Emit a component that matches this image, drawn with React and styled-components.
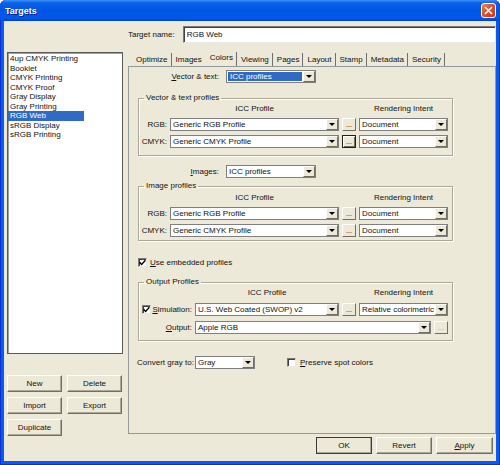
import React from "react";
import styled, { createGlobalStyle, css } from "styled-components";

const GlobalStyle = createGlobalStyle`
  html, body {
    margin: 0;
    padding: 0;
    background: #ffffff;
  }
  body {
    font-family: "Liberation Sans", Arial, sans-serif;
    font-size: 8px;
    color: #111;
  }
  #root {
    width: 500px;
    height: 465px;
  }
  * {
    box-sizing: border-box;
  }
`;

const Window = styled.div`
  width: 500px;
  height: 465px;
  display: flex;
  flex-direction: column;
  background: #0b5be6;
  border-radius: 6px 6px 0 0;
  box-shadow: inset 1px 0 0 #0831d9, inset -1px 0 0 #0831d9, inset 0 -1px 0 #0831d9;
  overflow: hidden;
`;

const TitleBar = styled.div`
  height: 21px;
  flex: none;
  display: flex;
  align-items: center;
  justify-content: space-between;
  padding: 0 4px 0 5px;
  background: linear-gradient(#3e8ff7 0%, #0a60e8 14%, #0054e3 50%, #0159ea 86%, #003ed8 100%);
`;

const Title = styled.span`
  color: #fff;
  font-size: 9px;
  font-weight: bold;
  text-shadow: 1px 1px 0 #0a1e8a;
`;

const CloseBtn = styled.div`
  width: 15px;
  height: 15px;
  border: 1px solid #fff;
  border-radius: 3px;
  background: linear-gradient(135deg, #e9865f 0%, #d9512c 45%, #c23a1b 100%);
  display: flex;
  align-items: center;
  justify-content: center;
`;

const Client = styled.div`
  flex: 1;
  margin: 0 4px 4px;
  background: #ece9d8;
  display: grid;
  grid-template-columns: 116px 368px;
  column-gap: 5px;
  padding-left: 3px;
`;

const LeftCol = styled.div`
  display: flex;
  flex-direction: column;
  padding-top: 31px;
`;

const TargetList = styled.div`
  height: 302px;
  background: #fff;
  border: 1px solid #5a5a5a;
  box-shadow: inset 1px 1px 0 #a0a0a0;
  padding-top: 1px;
`;

const ListItems = styled.div`
  display: inline-flex;
  flex-direction: column;
`;

const ListItem = styled.div`
  height: 9.5px;
  line-height: 9.5px;
  padding: 0 6px 0 2px;
  white-space: nowrap;
  ${(p) =>
    p.$selected &&
    css`
      background: #316ac5;
      color: #fff;
    `}
`;

const LeftButtons = styled.div`
  margin-top: 21px;
  display: grid;
  grid-template-columns: 55px 55px;
  column-gap: 5px;
  row-gap: 5px;
`;

const Button = styled.div`
  height: 17px;
  width: ${(p) => (p.$w ? `${p.$w}px` : "auto")};
  display: flex;
  align-items: center;
  justify-content: center;
  background: #ece9d8;
  border: 1px solid;
  border-color: #ffffff #716f64 #716f64 #ffffff;
  box-shadow: inset -1px -1px 0 #aca899;
  ${(p) =>
    p.$default &&
    css`
      outline: 1px solid #3c3c3c;
      outline-offset: -1px;
    `}
`;

const RightCol = styled.div`
  display: flex;
  flex-direction: column;
`;

const NameRow = styled.div`
  margin-top: 5px;
  height: 17px;
  display: flex;
  align-items: center;
  gap: 8px;
`;

const TextInput = styled.div`
  flex: 1;
  height: 17px;
  background: #fff;
  border: 1px solid;
  border-color: #7a7a7a #e8e8e8 #e8e8e8 #7a7a7a;
  box-shadow: inset 1px 1px 0 #404040;
  padding-left: 3px;
  line-height: 15px;
`;

const TabStrip = styled.div`
  margin-top: 9px;
  height: 14px;
  display: flex;
  align-items: flex-end;
  padding-left: 4px;
`;

const Tab = styled.div`
  padding: 0 3px ${(p) => (p.$active ? "2px" : "0")} 4px;
  height: ${(p) => (p.$active ? "14px" : "13px")};
  line-height: ${(p) => (p.$active ? "11px" : "13px")};
  border-right: 1px solid ${(p) => (p.$noSep ? "transparent" : "#6f6f6f")};
  white-space: nowrap;
`;

const Panel = styled.div`
  height: 368px;
  border: 1px solid #919b9c;
  display: flex;
  flex-direction: column;
  align-items: flex-start;
`;

const TopRow = styled.div`
  margin-top: ${(p) => p.$mt}px;
  height: 13px;
  display: flex;
  align-items: center;
  gap: 7px;
`;

const Label = styled.span`
  width: ${(p) => (p.$w ? `${p.$w}px` : "auto")};
  text-align: ${(p) => p.$align || "left"};
  white-space: nowrap;
  flex: none;
`;

const SelectBox = styled.div`
  width: ${(p) => (p.$w ? `${p.$w}px` : "auto")};
  flex: ${(p) => (p.$grow ? 1 : "none")};
  height: 13px;
  display: flex;
  background: #fff;
  border: 1px solid #7f7f7f;
  min-width: 0;
`;

const SelectValue = styled.div`
  flex: 1;
  min-width: 0;
  padding-left: 2px;
  line-height: 11px;
  white-space: nowrap;
  overflow: hidden;
  ${(p) =>
    p.$focused &&
    css`
      margin: 1px;
      line-height: 9px;
      background: #316ac5;
      color: #fff;
    `}
`;

const ArrowBtn = styled.div`
  width: 12px;
  flex: none;
  background: #ece9d8;
  border: 1px solid;
  border-color: #ffffff #716f64 #716f64 #ffffff;
  display: flex;
  align-items: center;
  justify-content: center;
`;

const Triangle = styled.div`
  width: 0;
  height: 0;
  border-left: 3px solid transparent;
  border-right: 3px solid transparent;
  border-top: 3px solid #000;
`;

const Ellipsis = styled.div`
  width: 14px;
  height: 13px;
  flex: none;
  background: #ece9d8;
  border: 1px solid;
  border-color: #ffffff #716f64 #716f64 #ffffff;
  display: flex;
  align-items: center;
  justify-content: center;
  line-height: 6px;
  font-size: 7px;
  color: ${(p) => (p.$disabled ? "#aca899" : "#000")};
  ${(p) =>
    p.$focused &&
    css`
      border-color: #1f1f1f;
      box-shadow: inset 1px 1px 0 #fff, inset -1px -1px 0 #716f64;
    `}
`;

const Group = styled.fieldset`
  margin: ${(p) => p.$mt}px 0 0 9px;
  width: 315px;
  padding: ${(p) => p.$pt}px 4px ${(p) => p.$pb}px 0;
  border: 1px solid #aca899;
  box-shadow: inset 1px 1px 0 #fff, 1px 1px 0 #fff;
  min-width: 0;
`;

const Legend = styled.legend`
  margin-left: 5px;
  padding: 0 2px;
  line-height: 10px;
  font-size: 8px;
`;

const ProfileGrid = styled.div`
  display: grid;
  grid-template-columns: ${(p) => p.$labelW}px 1fr 14px 89px;
  column-gap: 3px;
  row-gap: ${(p) => p.$gap}px;
  align-items: center;
`;

const HeadCell = styled.div`
  grid-column: ${(p) => p.$col};
  height: 10px;
  line-height: 10px;
  text-align: center;
  white-space: nowrap;
`;

const RowLabel = styled.div`
  text-align: right;
  line-height: 13px;
  white-space: nowrap;
`;

const SimLabel = styled.div`
  display: flex;
  align-items: center;
  justify-content: space-between;
  padding-left: 3px;
  white-space: nowrap;
`;

const SpanCell = styled.div`
  grid-column: 2 / -1;
  display: flex;
  gap: 3px;
  min-width: 0;
`;

const CheckRow = styled.div`
  margin: ${(p) => p.$mt}px 0 0 9px;
  height: 13px;
  display: flex;
  align-items: center;
  gap: 3px;
`;

const CheckBoxFrame = styled.div`
  width: 9px;
  height: 9px;
  flex: none;
  background: #fff;
  border: 1px solid;
  border-color: #7a7a7a #e8e8e8 #e8e8e8 #7a7a7a;
  box-shadow: inset 1px 1px 0 #404040;
  display: flex;
  align-items: center;
  justify-content: center;
`;

const BottomRow = styled.div`
  margin: 15px 0 0 8px;
  height: 13px;
  display: flex;
  align-items: center;
`;

const PreserveBox = styled.div`
  margin-left: 32px;
  display: flex;
  align-items: center;
  gap: 4px;
`;

const Footer = styled.div`
  margin-top: 3px;
  display: flex;
  justify-content: flex-end;
  gap: 4px;
  padding-right: 3px;
`;

const targets = [
  "4up CMYK Printing",
  "Booklet",
  "CMYK Printing",
  "CMYK Proof",
  "Gray Display",
  "Gray Printing",
  "RGB Web",
  "sRGB Display",
  "sRGB Printing",
];

const tabs = ["Optimize", "Images", "Colors", "Viewing", "Pages", "Layout", "Stamp", "Metadata", "Security"];

function Select({ value, w, focused, grow }) {
  return (
    <SelectBox $w={w} $grow={grow}>
      <SelectValue $focused={focused}>{value}</SelectValue>
      <ArrowBtn>
        <Triangle />
      </ArrowBtn>
    </SelectBox>
  );
}

function Check({ checked }) {
  return (
    <CheckBoxFrame>
      {checked && (
        <svg width="7" height="7" viewBox="0 0 7 7">
          <path d="M0.6 3.2 L2.6 5.4 L6.4 1.2" stroke="#000" strokeWidth="1.4" fill="none" />
        </svg>
      )}
    </CheckBoxFrame>
  );
}

function ProfileRow({ label, profile, intent, focusedDots }) {
  return (
    <>
      <RowLabel>{label}</RowLabel>
      <Select value={profile} />
      <Ellipsis $focused={focusedDots}>...</Ellipsis>
      <Select value={intent} />
    </>
  );
}

export default function App() {
  const activeTab = tabs.indexOf("Colors");
  return (
    <>
      <GlobalStyle />
      <Window>
        <TitleBar>
          <Title>Targets</Title>
          <CloseBtn>
            <svg width="9" height="9" viewBox="0 0 9 9">
              <path d="M1 1 L8 8 M8 1 L1 8" stroke="#fff" strokeWidth="1.7" />
            </svg>
          </CloseBtn>
        </TitleBar>
        <Client>
          <LeftCol>
            <TargetList>
              <ListItems>
                {targets.map((t) => (
                  <ListItem key={t} $selected={t === "RGB Web"}>
                    {t}
                  </ListItem>
                ))}
              </ListItems>
            </TargetList>
            <LeftButtons>
              <Button>New</Button>
              <Button>Delete</Button>
              <Button>Import</Button>
              <Button>Export</Button>
              <Button>Duplicate</Button>
            </LeftButtons>
          </LeftCol>

          <RightCol>
            <NameRow>
              <Label>Target name:</Label>
              <TextInput>RGB Web</TextInput>
            </NameRow>

            <TabStrip>
              {tabs.map((t, i) => (
                <Tab key={t} $active={i === activeTab} $noSep={i === activeTab - 1}>
                  {t}
                </Tab>
              ))}
            </TabStrip>

            <Panel>
              <TopRow $mt={3}>
                <Label $w={90} $align="right">
                  <u>V</u>ector &amp; text:
                </Label>
                <Select value="ICC profiles" w={90} focused />
              </TopRow>

              <Group $mt={10} $pt={1} $pb={7}>
                <Legend>Vector &amp; text profiles</Legend>
                <ProfileGrid $labelW={28} $gap={4}>
                  <HeadCell $col={2}>ICC Profile</HeadCell>
                  <HeadCell $col={4}>Rendering Intent</HeadCell>
                  <ProfileRow label="RGB:" profile="Generic RGB Profile" intent="Document" />
                  <ProfileRow label="CMYK:" profile="Generic CMYK Profile" intent="Document" focusedDots />
                </ProfileGrid>
              </Group>

              <TopRow $mt={9}>
                <Label $w={90} $align="right">
                  <u>I</u>mages:
                </Label>
                <Select value="ICC profiles" w={90} />
              </TopRow>

              <Group $mt={3} $pt={2} $pb={3}>
                <Legend>Image profiles</Legend>
                <ProfileGrid $labelW={28} $gap={4}>
                  <HeadCell $col={2}>ICC Profile</HeadCell>
                  <HeadCell $col={4}>Rendering Intent</HeadCell>
                  <ProfileRow label="RGB:" profile="Generic RGB Profile" intent="Document" />
                  <ProfileRow label="CMYK:" profile="Generic CMYK Profile" intent="Document" />
                </ProfileGrid>
              </Group>

              <CheckRow $mt={15}>
                <Check checked />
                <span>
                  <u>U</u>se embedded profiles
                </span>
              </CheckRow>

              <Group $mt={8} $pt={1} $pb={6}>
                <Legend>Output Profiles</Legend>
                <ProfileGrid $labelW={53} $gap={5}>
                  <HeadCell $col={2}>ICC Profile</HeadCell>
                  <HeadCell $col={4}>Rendering Intent</HeadCell>
                  <SimLabel>
                    <Check checked />
                    <span>
                      <u>S</u>imulation:
                    </span>
                  </SimLabel>
                  <Select value="U.S. Web Coated (SWOP) v2" />
                  <Ellipsis>...</Ellipsis>
                  <Select value="Relative colorimetric" />
                  <RowLabel>
                    <u>O</u>utput:
                  </RowLabel>
                  <SpanCell>
                    <Select value="Apple RGB" grow />
                    <Ellipsis $disabled>...</Ellipsis>
                  </SpanCell>
                </ProfileGrid>
              </Group>

              <BottomRow>
                <Label $w={58}>Convert gray to:</Label>
                <Select value="Gray" w={60} />
                <PreserveBox>
                  <Check />
                  <span>
                    <u>P</u>reserve spot colors
                  </span>
                </PreserveBox>
              </BottomRow>
            </Panel>

            <Footer>
              <Button $w={56} $default>
                OK
              </Button>
              <Button $w={56}>Revert</Button>
              <Button $w={57}>
                <span>
                  <u>A</u>pply
                </span>
              </Button>
            </Footer>
          </RightCol>
        </Client>
      </Window>
    </>
  );
}
